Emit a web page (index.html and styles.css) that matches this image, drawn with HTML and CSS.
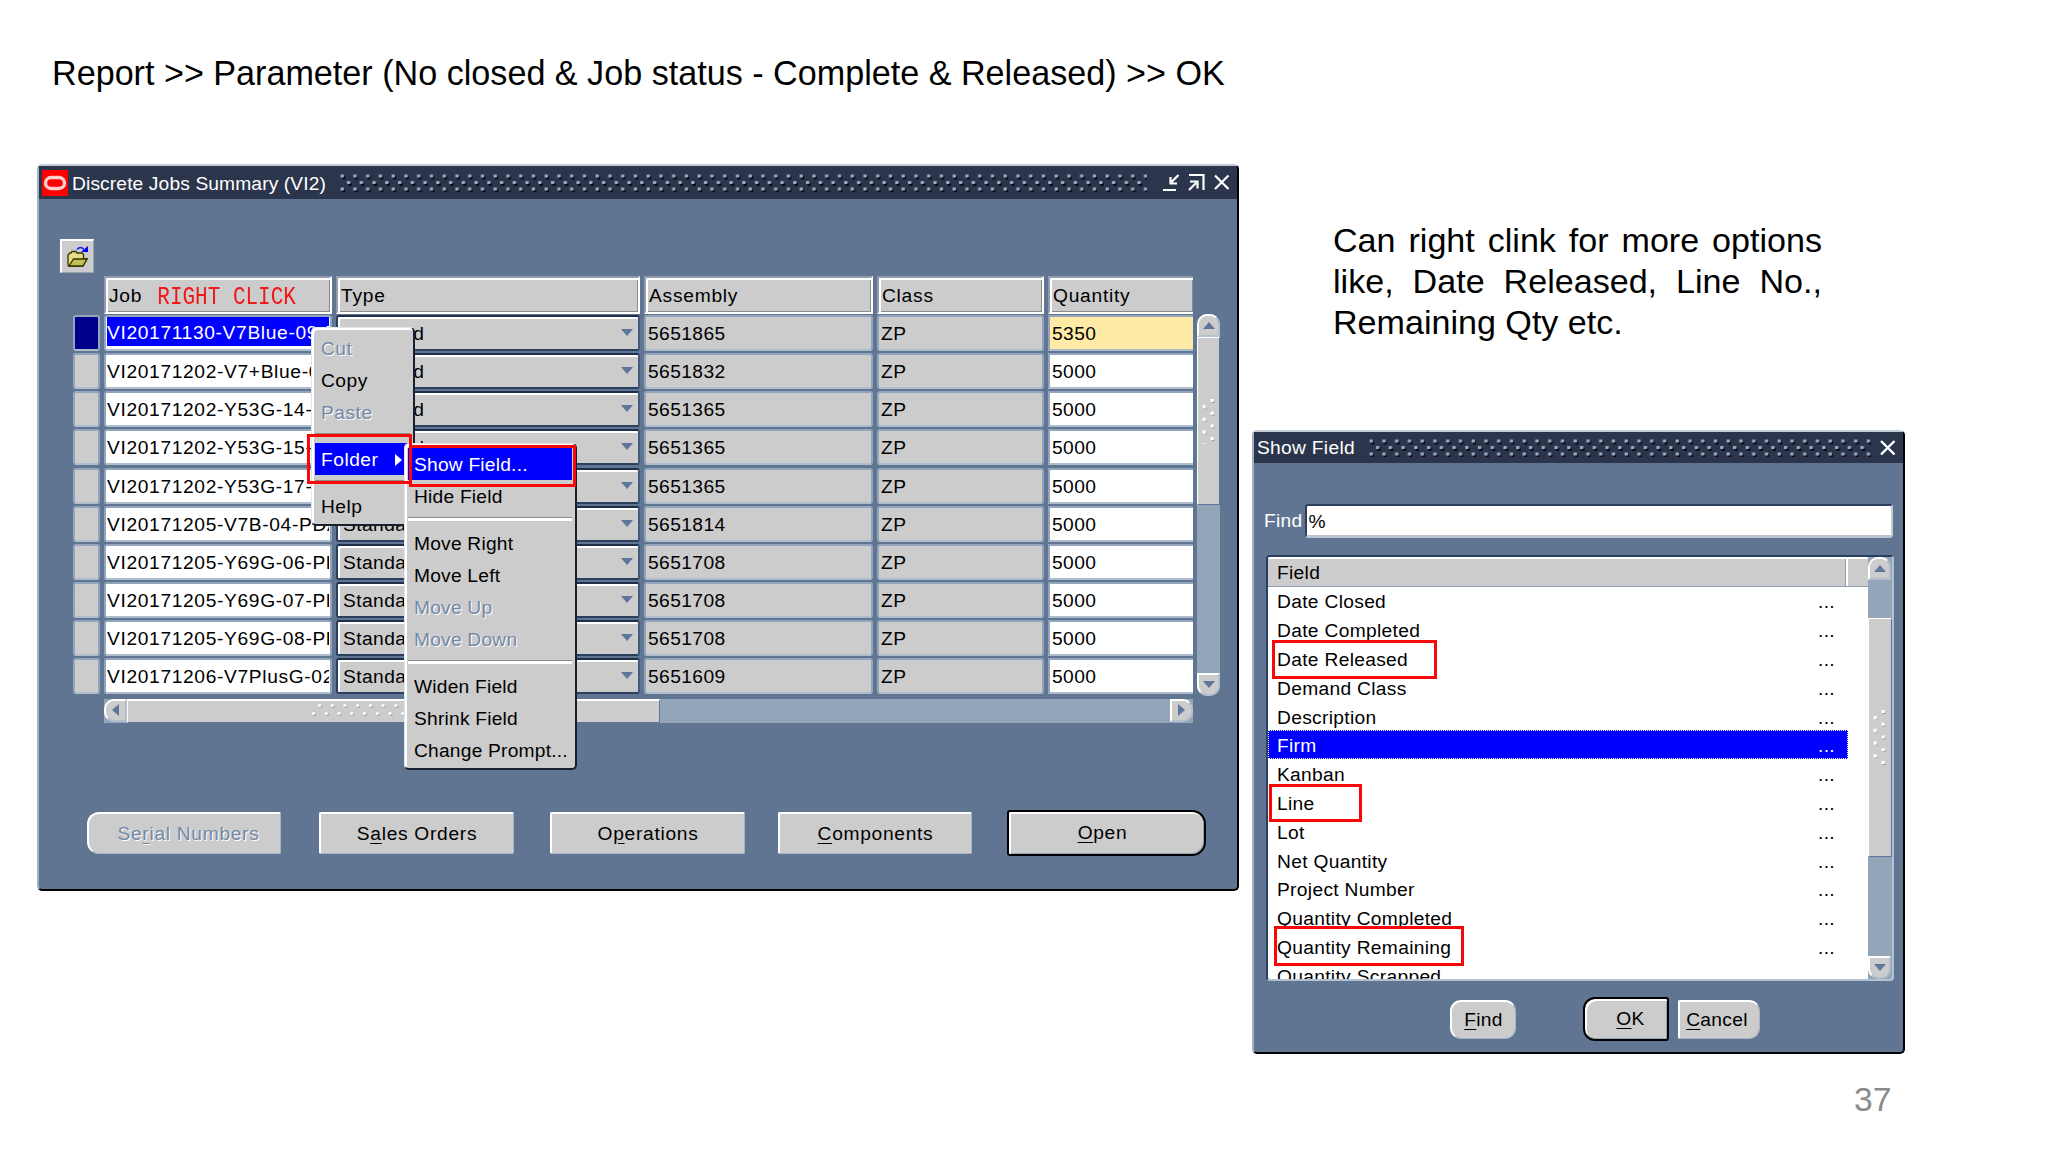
FILE: index.html
```
<!DOCTYPE html>
<html lang="en">
<head>
    <meta charset="UTF-8">
    <meta name="viewport" content="width=device-width, initial-scale=1.0">
    <title>Discrete Jobs Summary - Show Field</title>
    <link rel="stylesheet" href="styles.css">
</head>
<body>
<div class="slide">
    <!-- shared grip textures -->
    <svg class="defs" width="0" height="0">
        <defs>
            <pattern id="grip" width="12.75" height="13" patternUnits="userSpaceOnUse">
                <path d="M2 4h3.200M8.400 10.500h3.200" stroke="#070c18" stroke-width="3"/>
                <path d="M0.600 2h3.200M7 8.500h3.200" stroke="#9aacc0" stroke-width="2.800"/>
            </pattern>
            <pattern id="gripH" width="12.75" height="16" patternUnits="userSpaceOnUse">
                <path d="M8 3.6h3M2 11.6h3" stroke="#8d97a5" stroke-width="2"/>
                <path d="M7 2.5h3M1 10.5h3" stroke="#fff" stroke-width="2.6"/>
            </pattern>
            <pattern id="gripV" width="16" height="12.75" patternUnits="userSpaceOnUse">
                <path d="M11.5 3.6h3M3.5 9.8h3" stroke="#8d97a5" stroke-width="2.4"/>
                <path d="M10.5 2.5h3.4M2.5 8.7h3.4" stroke="#fff" stroke-width="3"/>
            </pattern>
        </defs>
    </svg>

    <h1 class="heading">Report &gt;&gt; Parameter (No closed &amp; Job status - Complete &amp; Released) &gt;&gt; OK</h1>
    <p class="note">Can right clink for more options like, Date Released, Line No., Remaining Qty etc.</p>
    <div class="page-number">37</div>

    <!-- Discrete Jobs Summary -->
    <section class="window jobs">
        <header class="titlebar">
            <svg class="logo" width="26" height="26" viewBox="0 0 26 26">
                <rect width="26" height="26" fill="#f00"/>
                <rect x="3.5" y="7.5" width="19" height="11" rx="5.5" fill="none" stroke="#ffd0d0" stroke-width="3.4"/>
            </svg>
            <span class="title">Discrete Jobs Summary (VI2)</span>
            <svg class="grip" height="18"><rect width="100%" height="18" fill="url(#grip)"/></svg>
            <svg class="controls" width="68" height="20" viewBox="0 0 68 20" fill="none" stroke="#fff" stroke-width="2.2">
                <path d="M0 17h13M15.500 2L8 9.500M7.500 4v6.500h6.500"/>
                <path d="M26 2h14.500v15" /><path d="M26 17l7-7M27 8.500h7.500v7"/>
                <path d="M52 2.500l13.500 13.500M65.500 2.500L52 16"/>
            </svg>
        </header>

        <button class="folder-btn">
            <svg width="24" height="24" viewBox="0 0 24 24">
                <path d="M2 19V9l2-2h1l1-1.500h4L11 7h5l1.500 1.500V13h3.500l-4 7H3z" fill="#e4de86" stroke="#333300" stroke-width="1.3"/>
                <path d="M3 20l4.500-7H21l-4 7z" fill="#c6bf52" stroke="#333300" stroke-width="1.3"/>
                <path d="M11 3.500q3.500-4 7 0" fill="none" stroke="#2222ee" stroke-width="1.600"/>
                <path d="M22 0v6h-7z" fill="#00f"/>
            </svg>
        </button>

        <div class="grid">
            <div class="headers">
                <span class="head">Job <b class="hint">RIGHT CLICK</b></span>
                <span class="head">Type</span>
                <span class="head">Assembly</span>
                <span class="head">Class</span>
                <span class="head last">Quantity</span>
            </div>
            <div class="rows" id="rows"></div>
            <div class="vscroll">
                <i class="arrow up"></i>
                <div class="thumb"><svg width="18" height="46"><rect width="18" height="46" fill="url(#gripV)"/></svg></div>
                <i class="arrow down"></i>
            </div>
            <div class="hscroll">
                <i class="arrow left"></i>
                <div class="thumb"><svg width="166" height="16"><rect width="166" height="16" fill="url(#gripH)"/></svg></div>
                <i class="arrow right"></i>
            </div>
        </div>

        <div class="actions">
            <button class="btn serial" disabled>Se<u>r</u>ial Numbers</button>
            <button class="btn sales">S<u>a</u>les Orders</button>
            <button class="btn operations">O<u>p</u>erations</button>
            <button class="btn components"><u>C</u>omponents</button>
            <button class="btn open"><u>O</u>pen</button>
        </div>
    </section>

    <!-- right click menus -->
    <ul class="menu context">
        <li class="off">Cut</li>
        <li>Copy</li>
        <li class="off">Paste</li>
        <li class="sep"></li>
        <li class="active">Folder<i class="more"></i></li>
        <li class="sep"></li>
        <li>Help</li>
    </ul>
    <ul class="menu submenu">
        <li class="active">Show Field...</li>
        <li>Hide Field</li>
        <li class="sep"></li>
        <li>Move Right</li>
        <li>Move Left</li>
        <li class="off">Move Up</li>
        <li class="off">Move Down</li>
        <li class="sep"></li>
        <li>Widen Field</li>
        <li>Shrink Field</li>
        <li>Change Prompt...</li>
    </ul>
    <div class="mark mark-folder"></div>
    <div class="mark mark-show"></div>

    <!-- Show Field dialog -->
    <section class="window fields">
        <header class="titlebar">
            <span class="title">Show Field</span>
            <svg class="grip" height="18"><rect width="100%" height="18" fill="url(#grip)"/></svg>
            <svg class="controls" width="18" height="18" viewBox="0 0 18 18" fill="none" stroke="#fff" stroke-width="2.4">
                <path d="M2 2l13.500 13.500M15.500 2L2 15.500"/>
            </svg>
        </header>
        <div class="find">
            <label for="find">Find</label>
            <input id="find" type="text" value="%">
        </div>
        <div class="list">
            <div class="list-main">
                <div class="list-head"><span>Field</span></div>
                <div class="list-items" id="fields"></div>
            </div>
            <div class="vscroll">
                <i class="arrow up"></i>
                <div class="thumb"><svg width="18" height="58"><rect width="18" height="58" fill="url(#gripV)"/></svg></div>
                <i class="arrow down"></i>
            </div>
        </div>
        <div class="actions">
            <button class="btn find-btn"><u>F</u>ind</button>
            <button class="btn ok"><u>O</u>K</button>
            <button class="btn cancel"><u>C</u>ancel</button>
        </div>
    </section>
    <div class="mark mark-released"></div>
    <div class="mark mark-line"></div>
    <div class="mark mark-remaining"></div>
</div>

<script>
    const jobs = [
        ["VI20171130-V7Blue-09-PD", "5651865", "5350"],
        ["VI20171202-V7+Blue-03-PD", "5651832", "5000"],
        ["VI20171202-Y53G-14-PD", "5651365", "5000"],
        ["VI20171202-Y53G-15-PD", "5651365", "5000"],
        ["VI20171202-Y53G-17-PD", "5651365", "5000"],
        ["VI20171205-V7B-04-PDA", "5651814", "5000"],
        ["VI20171205-Y69G-06-PD", "5651708", "5000"],
        ["VI20171205-Y69G-07-PD", "5651708", "5000"],
        ["VI20171205-Y69G-08-PD", "5651708", "5000"],
        ["VI20171206-V7PlusG-02", "5651609", "5000"]
    ];

    document.getElementById("rows").innerHTML = jobs.map((job, i) => `
        <div class="row${i === 0 ? " current" : ""}">
            <span class="marker"></span>
            <span class="cell job"><em>${job[0]}</em></span>
            <span class="cell type">Standard<i class="drop"></i></span>
            <span class="cell">${job[1]}</span>
            <span class="cell">ZP</span>
            <span class="cell qty">${job[2]}</span>
        </div>`).join("");

    const fields = ["Date Closed", "Date Completed", "Date Released", "Demand Class", "Description",
        "Firm", "Kanban", "Line", "Lot", "Net Quantity", "Project Number",
        "Quantity Completed", "Quantity Remaining", "Quantity Scrapped"];

    document.getElementById("fields").innerHTML = fields.map(name => `
        <div class="item${name === "Firm" ? " selected" : ""}"><span>${name}</span><span class="dots">...</span></div>`).join("");
</script>
</body>
</html>
```

FILE: styles.css
```
* {
    box-sizing: border-box;
}
body {
    margin: 0;
    background: #fff;
    font-family: "Liberation Sans", Arial, sans-serif;
    color: #000;
}
.slide {
    position: relative;
    width: 2048px;
    height: 1152px;
    overflow: hidden;
}
.defs {
    position: absolute;
}
.heading {
    position: absolute;
    left: 52px;
    top: 53px;
    margin: 0;
    font-size: 34.15px;
    line-height: 40px;
    font-weight: normal;
    white-space: nowrap;
}
.note {
    position: absolute;
    left: 1333px;
    top: 220px;
    width: 489px;
    margin: 0;
    font-size: 34.1px;
    line-height: 41px;
    text-align: justify;
}
.page-number {
    position: absolute;
    left: 1854px;
    top: 1080px;
    font-size: 33.6px;
    line-height: 40px;
    color: #8b8b8b;
}

/* windows */
.window {
    position: absolute;
    display: flex;
    flex-direction: column;
    background: #607591;
    border: 2px solid #000;
    border-top-color: #c3ccd6;
    border-left-color: #a3b1c1;
    border-radius: 5px;
    font-size: 19.2px;
    letter-spacing: 0.42px;
}
.jobs {
    left: 37px;
    top: 164px;
    width: 1202px;
    height: 727px;
}
.fields {
    left: 1252px;
    top: 430px;
    width: 653px;
    height: 624px;
}
.titlebar {
    display: flex;
    align-items: center;
    height: 33px;
    flex: none;
    background: #2b364c;
    color: #fff;
    padding: 0 6px 0 3px;
}
.title {
    margin-left: 4px;
    padding-top: 2px;
    letter-spacing: 0.13px;
    white-space: nowrap;
}
.grip {
    flex: 1;
    min-width: 0;
    margin-left: 14px;
}
.controls {
    margin-left: 16px;
}
.fields .controls {
    margin-left: 8px;
}

/* buttons */
button {
    font: inherit;
    letter-spacing: inherit;
    color: #000;
    padding: 0;
    border: 0;
    background: #ccc;
}
.folder-btn {
    width: 34px;
    height: 34px;
    margin: 40px 0 0 21px;
    padding: 5px 4px;
    border: 1px solid #98a3b0;
    border-top: 2px solid #fff;
    border-left: 2px solid #fff;
}
.actions {
    display: flex;
}
.btn {
    height: 42px;
    border-top: 2px solid #fff;
    border-left: 2px solid #fff;
    border-right: 1px solid #a6b4c4;
    border-bottom: 1px solid #a6b4c4;
    border-radius: 2px;
}
.btn:disabled {
    color: #7488a6;
    text-shadow: 1px 1px 0 #fff;
}
u {
    text-underline-offset: 3px;
}

/* jobs grid */
.grid {
    display: grid;
    grid-template-columns: 1156px 24px;
    grid-template-rows: 38px 381.5px 26px;
    margin: 3px 0 0 0;
    height: 446px;
}
.headers {
    grid-column: 1;
    display: grid;
    grid-template-columns: 228px 304px 229px 167px 145px;
    column-gap: 4px;
    padding-left: 65px;
}
.head {
    height: 38px;
    padding: 0 0 0 3px;
    line-height: 36px;
    letter-spacing: 0.75px;
    background: #ccc;
    border: 2px solid #fff;
    border-top-color: #909cab;
    border-left-color: #909cab;
    box-shadow: inset 2px 2px #fff, inset -1px -1px #8b8b8b;
    white-space: nowrap;
}
.head.last {
    border-right: 0;
}
.hint {
    display: inline-block;
    margin-left: 9px;
    font: normal 21px "Liberation Mono", monospace;
    letter-spacing: 0;
    color: #f01818;
    transform: scaleY(1.22);
    transform-origin: 50% 40%;
}
.rows {
    grid-column: 1;
}
.row {
    display: grid;
    grid-template-columns: 27px 228px 304px 229px 167px 145px;
    column-gap: 4px;
    padding: 1px 0 0 34px;
    height: 38.15px;
}
.marker,
.cell {
    height: 36px;
    background: #ccc;
    border: 2px solid #93a5bc;
    border-bottom-color: #aebdcd;
    border-radius: 3px;
}
.current .marker {
    background: #00008b;
}
.cell {
    position: relative;
    padding-left: 2px;
    line-height: 33px;
    overflow: hidden;
    white-space: nowrap;
}
.job {
    background: #fff;
    padding: 0 1px;
}
.job em {
    display: block;
    font-style: normal;
    overflow: hidden;
    letter-spacing: 0.65px;
}
.current .job em {
    background: #00f;
    color: #fff;
    height: 29px;
    line-height: 32px;
}
.type {
    padding-left: 5px;
    border: 2px solid #2b3f60;
    border-top-color: #1f2e49;
    border-right-color: #43597b;
    box-shadow: inset 2px 2px #fff;
}
.drop {
    position: absolute;
    right: 5px;
    top: 12px;
    border: 6px solid transparent;
    border-top: 7px solid #60759b;
    border-bottom: 0;
}
.qty {
    background: #fff;
    border-right: 0;
    border-radius: 0;
}
.current .qty {
    background: #ffeba5;
}

/* scrollbars */
.vscroll,
.hscroll {
    display: flex;
    background: #93a5b8;
}
.vscroll {
    flex-direction: column;
    width: 24px;
    border-radius: 11px;
}
.jobs .vscroll {
    grid-column: 2;
    grid-row: 2;
    margin-left: 2px;
    width: 23px;
}
.hscroll {
    grid-column: 1;
    grid-row: 3;
    margin-left: 65px;
    margin-top: 3px;
    width: 1089px;
    height: 24px;
}
.arrow {
    display: flex;
    align-items: center;
    justify-content: center;
    flex: none;
    width: 23px;
    height: 23px;
    background: #ccc;
    border: 2px solid #fff;
    border-right-color: #b3bfcc;
    border-bottom-color: #b3bfcc;
}
.arrow::before {
    content: "";
    border: 6px solid transparent;
}
.up {
    border-radius: 10px 10px 0 0;
}
.up::before {
    border-bottom: 7px solid #60759b;
    border-top: 0;
}
.down {
    border-radius: 0 0 10px 10px;
    margin-top: auto;
}
.down::before {
    border-top: 7px solid #60759b;
    border-bottom: 0;
}
.left {
    border-radius: 10px 0 0 10px;
}
.left::before {
    border-right: 7px solid #60759b;
    border-left: 0;
}
.right {
    border-radius: 0 10px 10px 0;
    margin-left: auto;
}
.right::before {
    border-left: 7px solid #60759b;
    border-right: 0;
}
.thumb {
    display: flex;
    align-items: center;
    justify-content: center;
    background: #ccc;
    border: 1px solid #fff;
    border-right-color: #60759b;
    border-bottom-color: #60759b;
}
.jobs .vscroll .thumb {
    height: 168px;
}
.hscroll .thumb {
    width: 533px;
    border-top-width: 2px;
}
.jobs .actions {
    margin: 0 0 0 48px;
    padding-top: 88px;
    align-items: center;
    letter-spacing: 0.7px;
}
.serial {
    width: 194px;
    margin-right: 38px;
    border-radius: 12px 2px 2px 12px;
    padding-left: 8px;
}
.sales {
    width: 195px;
    margin-right: 36px;
}
.operations {
    width: 195px;
    margin-right: 33px;
}
.components {
    width: 194px;
    margin-right: 35px;
}
.open {
    width: 199px;
    height: 46px;
    border: 2px solid #000;
    border-radius: 3px 14px 14px 3px;
    box-shadow: inset 2px 2px #fff, inset -1px -1px #93a5b8;
    padding-right: 8px;
}

/* menus */
.menu {
    position: absolute;
    margin: 0;
    padding: 4px 3px;
    list-style: none;
    background: #ccc;
    border: 1px solid #dfe6ee;
    border-right: 2px solid #18202e;
    border-bottom: 2px solid #18202e;
    border-radius: 5px;
    box-shadow: inset 2px 2px #fff;
    font-size: 19.2px;
    letter-spacing: 0.22px;
}
.menu li {
    display: flex;
    align-items: center;
    height: 32px;
    padding: 2px 0 0 6px;
    white-space: nowrap;
}
.menu li.sep {
    display: block;
    height: 15px;
    padding: 5px 0 0;
}
.menu li.sep::before {
    content: "";
    display: block;
    height: 3px;
    background: #fff;
    border-top: 1px solid #8b8b8b;
}
.menu li.active {
    background: #00f;
    color: #fff;
}
.menu li.off {
    color: #7488a6;
    text-shadow: 1px 1px 0 #fff;
}
.context {
    left: 311px;
    top: 327px;
    width: 104px;
    height: 199px;
    letter-spacing: 0.5px;
}
.submenu {
    left: 404px;
    top: 443px;
    width: 173px;
    height: 327px;
}
.more {
    margin-left: auto;
    margin-right: 8px;
    border: 6px solid transparent;
    border-left: 7px solid #fff;
    border-right: 0;
}

/* red highlight boxes */
.mark {
    position: absolute;
    border: 3px solid #f80808;
}
.mark-folder {
    left: 307px;
    top: 434px;
    width: 105px;
    height: 50px;
}
.mark-show {
    left: 409px;
    top: 445px;
    width: 167px;
    height: 42px;
}
.mark-released {
    left: 1272px;
    top: 640px;
    width: 165px;
    height: 39px;
}
.mark-line {
    left: 1269px;
    top: 784px;
    width: 93px;
    height: 38px;
}
.mark-remaining {
    left: 1274px;
    top: 926px;
    width: 190px;
    height: 40px;
}

/* show field dialog */
.fields {
    letter-spacing: 0.32px;
}
.fields .titlebar {
    height: 31px;
    padding-left: 0;
}
.fields .title {
    margin-left: 3px;
    padding-top: 0;
    letter-spacing: 0.3px;
}
.find {
    display: flex;
    align-items: center;
    margin: 41px 10px 0 10px;
    color: #fff;
}
.find input {
    flex: 1;
    height: 34px;
    margin-left: 2px;
    padding: 2px 0 0 2px;
    font: inherit;
    border: 2px solid #2b3f60;
    border-right-color: #c3ccd6;
    border-bottom: 3px solid #b8c3ce;
    border-radius: 3px;
}
.list {
    display: flex;
    height: 426px;
    margin: 17px 9px 0 12px;
    background: #fff;
    border: 2px solid #2b3f60;
    border-right-color: #b4c2d0;
    border-bottom-color: #b4c2d0;
    border-radius: 4px;
    overflow: hidden;
}
.list-main {
    flex: 1;
}
.list-head {
    display: flex;
    height: 29.5px;
    background: #ccc;
    border-top: 2px solid #fff;
    border-bottom: 1px solid #8d9bb3;
}
.list-head span {
    width: 580px;
    padding-left: 9px;
    line-height: 28px;
    border-right: 2px solid #fff;
    box-shadow: inset -1px 0 #8d9bb3;
}
.item {
    display: flex;
    justify-content: space-between;
    align-items: center;
    width: 580px;
    height: 28.8px;
    padding: 3px 13px 0 9px;
}
.item.selected {
    background: #00f;
    color: #fff;
    outline: 1px dotted #fff;
    outline-offset: -1px;
}
.list .vscroll {
    border-radius: 0;
}
.list .thumb {
    height: 239px;
    margin-top: 38px;
}
.fields .actions {
    margin: 16px 0 0 196px;
    align-items: center;
}
.fields .btn {
    height: 39px;
}
.find-btn {
    width: 66px;
    margin-right: 67px;
    border-radius: 11px;
}
.fields .ok {
    width: 86px;
    height: 44px;
    margin-right: 9px;
    padding-left: 9px;
    border: 2px solid #000;
    border-radius: 12px 3px 3px 12px;
    box-shadow: inset 2px 2px #fff, inset -1px -1px #93a5b8;
}
.cancel {
    width: 82px;
    padding-right: 5px;
    border-radius: 2px 11px 11px 2px;
}
```
